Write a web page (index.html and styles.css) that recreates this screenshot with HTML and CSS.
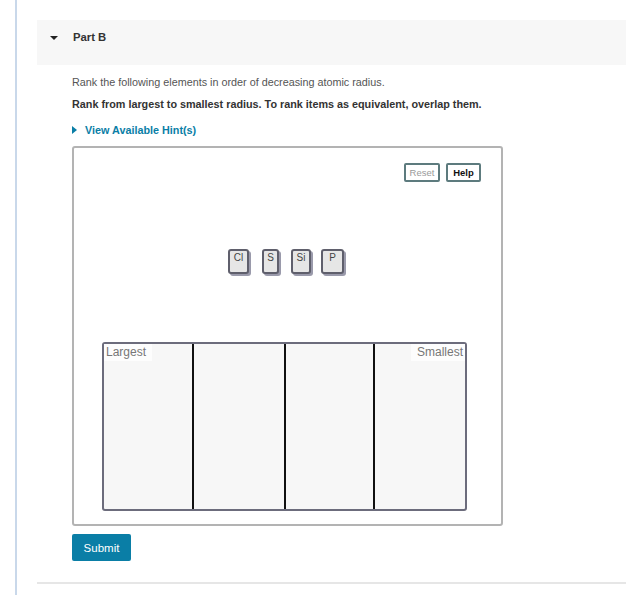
FILE: index.html
```html
<!DOCTYPE html>
<html>
<head>
<meta charset="utf-8">
<link rel="stylesheet" href="styles.css">
</head>
<body>
<div class="page">
  <div class="part-header">
    <span class="caret-down"></span>
    <span class="part-title">Part B</span>
  </div>
  <div class="part-body">
    <p class="prompt">Rank the following elements in order of decreasing atomic radius.</p>
    <p class="instruction">Rank from largest to smallest radius. To rank items as equivalent, overlap them.</p>
    <div class="hint"><span class="caret-right"></span><span class="hint-text">View Available Hint(s)</span></div>
    <div class="workspace">
      <div class="tools">
        <button class="tool-btn reset">Reset</button>
        <button class="tool-btn help">Help</button>
      </div>
      <div class="tiles">
        <div class="tile tile-cl">Cl</div>
        <div class="tile tile-s">S</div>
        <div class="tile tile-si">Si</div>
        <div class="tile tile-p">P</div>
      </div>
      <div class="ranking">
        <div class="cell"><span class="label left">Largest</span></div>
        <div class="cell"></div>
        <div class="cell"></div>
        <div class="cell"><span class="label right">Smallest</span></div>
      </div>
    </div>
    <button class="submit">Submit</button>
  </div>
  <div class="rule"></div>
</div>
</body>
</html>
```

FILE: styles.css
```css
html, body {
  margin: 0;
  padding: 0;
  background: #ffffff;
}
body {
  font-family: "Liberation Sans", Arial, sans-serif;
  color: #333333;
  width: 626px;
  height: 595px;
  overflow: hidden;
}
.page {
  margin-left: 15px;
  border-left: 2px solid #c9d8ea;
  padding-left: 20px;
  padding-top: 20px;
  height: 575px;
}
.part-header {
  box-sizing: border-box;
  background: #f7f7f7;
  height: 45px;
  display: flex;
  align-items: flex-start;
  padding: 10px 0 0 13px;
}
.caret-down {
  width: 0;
  height: 0;
  border-left: 4px solid transparent;
  border-right: 4px solid transparent;
  border-top: 4px solid #222;
  margin-top: 6px;
}
.part-title {
  margin-left: 15px;
  font-size: 11.3px;
  line-height: 14px;
  font-weight: bold;
  color: #333;
}
.part-body {
  padding-left: 35px;
}
.prompt {
  margin: 11px 0 0 0;
  font-size: 10.8px;
  line-height: 13px;
  color: #555;
}
.instruction {
  margin: 9px 0 0 0;
  font-size: 10.8px;
  line-height: 13px;
  font-weight: bold;
  color: #333;
}
.hint {
  margin-top: 12px;
  display: flex;
  align-items: center;
  height: 13px;
}
.caret-right {
  width: 0;
  height: 0;
  border-top: 4px solid transparent;
  border-bottom: 4px solid transparent;
  border-left: 5px solid #0a7ea6;
}
.hint-text {
  margin-left: 8px;
  font-size: 10.8px;
  font-weight: bold;
  color: #0a7ea6;
}
.workspace {
  margin-top: 10px;
  width: 427px;
  height: 376px;
  border: 2px solid #b3b3b3;
  border-radius: 3px;
  position: relative;
}
.tools {
  display: flex;
  justify-content: flex-end;
  gap: 6px;
  padding: 15px 20px 0 0;
}
.tool-btn {
  box-sizing: border-box;
  font-family: "Liberation Sans", Arial, sans-serif;
  font-size: 9.5px;
  font-weight: bold;
  height: 19px;
  padding: 0;
  background: #ffffff;
  border: 2px solid #5d7b7e;
  border-radius: 2px;
  line-height: 15px;
}
.tool-btn.reset {
  width: 36px;
  color: #9a9a9a;
  font-weight: normal;
}
.tool-btn.help {
  width: 35px;
  color: #111111;
}
.tiles {
  display: flex;
  margin-top: 67px;
  padding-left: 154px;
}
.tile {
  box-sizing: border-box;
  height: 25px;
  border: 2px solid #5f5f6c;
  border-radius: 3px;
  background: #e6e6e6;
  box-shadow: 2px 2px 0 #9a9aab;
  font-size: 10px;
  color: #444;
  text-align: center;
  line-height: 12px;
  padding-top: 1px;
}
.tile-cl { width: 21px; margin-right: 13px; }
.tile-s { width: 17px; margin-right: 12px; }
.tile-si { width: 20px; margin-right: 10px; }
.tile-p { width: 23px; }
.ranking {
  margin: 68px 0 0 28px;
  box-sizing: border-box;
  width: 365px;
  height: 169px;
  border: 2px solid #6c6c7c;
  border-radius: 3px;
  background: #f7f7f7;
  display: grid;
  grid-template-columns: 88px 92px 89px 1fr;
}
.cell {
  position: relative;
  border-left: 2px solid #111111;
}
.cell:first-child {
  border-left: none;
}
.label {
  position: absolute;
  top: 0;
  font-size: 12px;
  line-height: 17px;
  height: 17px;
  color: #777777;
  background: #fdfdfd;
  padding: 0 2px;
}
.label.left {
  left: 0;
  padding-right: 6px;
}
.label.right {
  right: 0;
  padding-left: 6px;
}
.submit {
  margin-top: 8px;
  width: 59px;
  height: 27px;
  background: #0a7ea6;
  border: none;
  border-radius: 2px;
  color: #ffffff;
  font-family: "Liberation Sans", Arial, sans-serif;
  font-size: 11.5px;
  padding: 0;
}
.rule {
  margin-top: 21px;
  height: 2px;
  background: #e6e6e6;
}
```
